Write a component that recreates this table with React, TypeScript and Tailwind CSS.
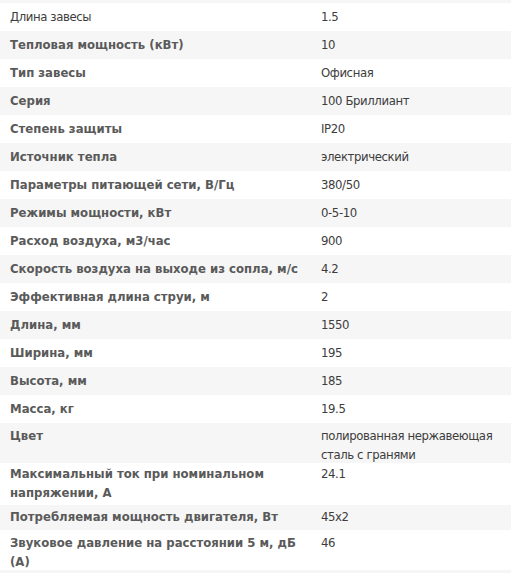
import React from "react";

type Row = { label: string; value: string; h: string; pt: string; bold?: boolean };

const rows: Row[] = [
  { label: "Длина завесы", value: "1.5", h: "h-[28px]", pt: "pt-[4px]", bold: false },
  { label: "Тепловая мощность (кВт)", value: "10", h: "h-[28px]", pt: "pt-[4px]" },
  { label: "Тип завесы", value: "Офисная", h: "h-[28px]", pt: "pt-[4px]" },
  { label: "Серия", value: "100 Бриллиант", h: "h-[28px]", pt: "pt-[4px]" },
  { label: "Степень защиты", value: "IP20", h: "h-[28px]", pt: "pt-[4px]" },
  { label: "Источник тепла", value: "электрический", h: "h-[28px]", pt: "pt-[4px]" },
  { label: "Параметры питающей сети, В/Гц", value: "380/50", h: "h-[28px]", pt: "pt-[4px]" },
  { label: "Режимы мощности, кВт", value: "0-5-10", h: "h-[28px]", pt: "pt-[4px]" },
  { label: "Расход воздуха, м3/час", value: "900", h: "h-[28px]", pt: "pt-[4px]" },
  { label: "Скорость воздуха на выходе из сопла, м/с", value: "4.2", h: "h-[28px]", pt: "pt-[4px]" },
  { label: "Эффективная длина струи, м", value: "2", h: "h-[28px]", pt: "pt-[4px]" },
  { label: "Длина, мм", value: "1550", h: "h-[28px]", pt: "pt-[4px]" },
  { label: "Ширина, мм", value: "195", h: "h-[28px]", pt: "pt-[4px]" },
  { label: "Высота, мм", value: "185", h: "h-[28px]", pt: "pt-[4px]" },
  { label: "Масса, кг", value: "19.5", h: "h-[28px]", pt: "pt-[4px]" },
  { label: "Цвет", value: "полированная нержавеющая сталь с гранями", h: "h-[40px]", pt: "pt-[3px]" },
  { label: "Максимальный ток при номинальном напряжении, А", value: "24.1", h: "h-[42px]", pt: "pt-[1px]" },
  { label: "Потребляемая мощность двигателя, Вт", value: "45x2", h: "h-[25px]", pt: "pt-[2px]" },
  { label: "Звуковое давление на расстоянии 5 м, дБ (А)", value: "46", h: "h-[40px]", pt: "pt-[3px]" },
];

export default function App() {
  return (
    <div
      className="w-[511px] h-[573px] overflow-hidden bg-white text-[13px] leading-[19px]"
      style={{ fontFamily: '"DejaVu Sans Condensed", "DejaVu Sans", sans-serif' }}
    >
      <div className="h-[3px] bg-[#f6f6f6]" />
      {rows.map((r, i) => (
        <div
          key={i}
          className={`grid grid-cols-[311px_1fr] ${r.h} ${i % 2 === 1 ? "bg-[#f6f6f6]" : "bg-white"}`}
        >
          <div
            className={`pl-[10px] pr-[8px] ${r.pt} ${
              r.bold === false
                ? "font-normal tracking-[-0.4px] text-[#3d3d3d]"
                : "font-bold text-[#5a5a5a]"
            }`}
          >
            {r.label}
          </div>
          <div className={`pl-[10px] pr-[8px] ${r.pt} tracking-[-0.4px] text-[#3d3d3d]`}>{r.value}</div>
        </div>
      ))}
      <div className="h-[3px] bg-[#f6f6f6]" />
    </div>
  );
}
